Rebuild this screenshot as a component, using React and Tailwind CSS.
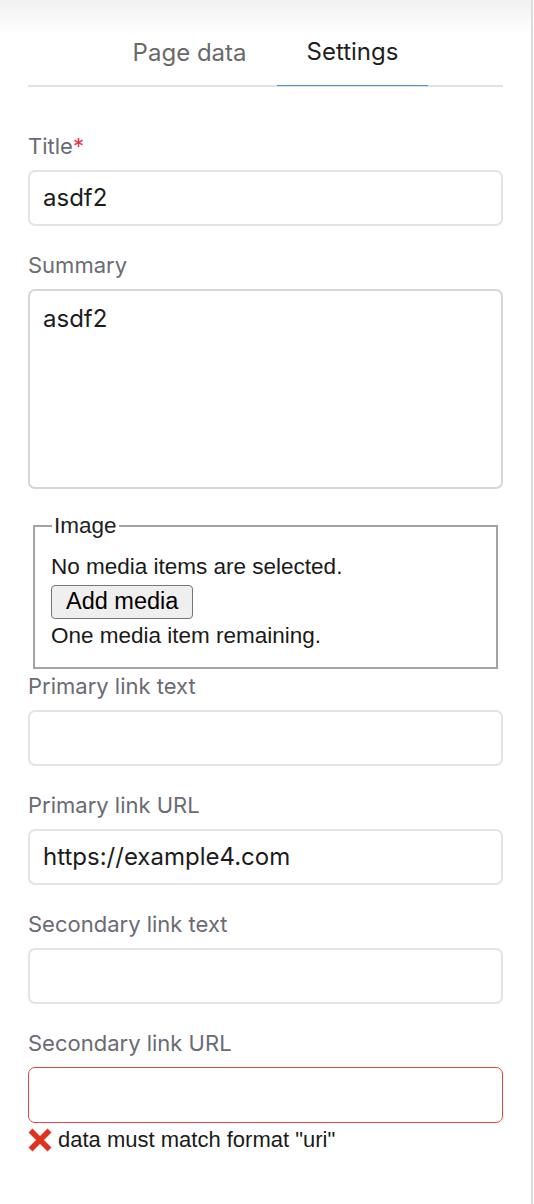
import React from "react";

const sans = { fontFamily: "Inter, 'Noto Sans', sans-serif" };
const arial = { fontFamily: "'Liberation Sans', Arial, sans-serif" };

function Label({ children, required }) {
  return (
    <div className="text-[22px] leading-[26px] text-[#6b6b75] mb-[11px]">
      {children}
      {required && <span className="text-[#e5344a]">*</span>}
    </div>
  );
}

function Field({ label, required, value, h = "h-[56px]", textarea }) {
  return (
    <div className="mb-[26px]">
      <Label required={required}>{label}</Label>
      <div
        className={`${h} w-full rounded-[7px] border-2 ${
          textarea ? "border-[#d6d6d8] pt-[12px]" : "border-[#e3e3e8] flex items-center"
        } bg-white px-[13px] text-[24px] leading-8 text-[#1c1c1e]`}
      >
        {value}
      </div>
    </div>
  );
}

export default function App() {
  return (
    <div className="w-[534px] min-h-[1204px] bg-white">
      <div
        className="w-[533px] min-h-[1204px] border-r-2 border-[#dcdcdc] bg-[linear-gradient(to_bottom,#f1f1f1,#ffffff_34px)]"
        style={sans}
      >
        <div className="pt-[21px] mx-[28px] border-b-2 border-[#e2e2e2] flex justify-center">
          <div className="px-[30px] pt-4 pb-4 text-[24px] leading-8 text-[#6a6a6a]">Page data</div>
          <div className="px-[30px] pt-4 pb-[15px] text-[24px] leading-8 text-[#1f1f1f] border-b border-[#4a8fe0] -mb-[2px] relative top-[-1px]">
            Settings
          </div>
        </div>

        <div className="px-[28px] pt-[46px]">
          <Field label="Title" required value="asdf2" />
          <div className="-mb-[2px]">
            <Field label="Summary" value="asdf2" h="h-[200px]" textarea />
          </div>

          <fieldset
            className="mx-[5px] border-2 border-[#a3a3a3] px-[16px] pb-[18px] text-[22.5px] leading-[26px] text-[#1a1a1a]"
            style={arial}
          >
            <legend className="px-[2px] ml-[1px] text-[#222]">Image</legend>
            <div className="mt-[15px]">No media items are selected.</div>
            <button
              className="mt-[5px] h-[34px] px-[14px] rounded-[4px] border border-[#767676] bg-[#efefef] text-[23.5px] text-black leading-none"
              style={arial}
            >
              Add media
            </button>
            <div className="mt-[4px]">One media item remaining.</div>
          </fieldset>

          <div className="mt-[4px]">
            <Field label="Primary link text" value="" />
            <Field label="Primary link URL" value="https://example4.com" />
            <Field label="Secondary link text" value="" />
            <Label>Secondary link URL</Label>
            <div className="h-[56px] w-full rounded-[7px] border-[1.5px] border-[#e5453f] bg-white" />
            <div className="mt-[4px] flex items-center text-[22px] leading-[26px] text-[#1a1a1a]" style={arial}>
              <svg width="24" height="24" viewBox="0 0 24 24" className="mr-[6px] shrink-0">
                <path d="M2.5 2.5 L21.5 21.5 M21.5 2.5 L2.5 21.5" stroke="#e1321f" strokeWidth="5.5" strokeLinecap="butt" />
              </svg>
              <span>data must match format "uri"</span>
            </div>
          </div>
        </div>
      </div>
    </div>
  );
}
